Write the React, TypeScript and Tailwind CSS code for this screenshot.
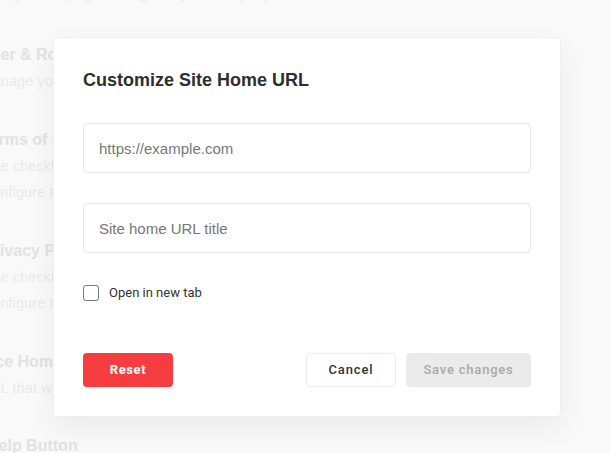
import React from "react";

const sans = { fontFamily: '"Liberation Sans", Arial, sans-serif' } as const;

function BgHeading({ text, offset }: { text: string; offset: string }) {
  return (
    <div className={`h-[26px] leading-[26px] text-[16px] font-bold text-[#e2e2e2] whitespace-nowrap ${offset}`}>{text}</div>
  );
}
function BgLine({ text, offset }: { text: string; offset: string }) {
  return (
    <div className={`h-[26px] leading-[26px] text-[14px] tracking-[0.3px] text-[#e9e9e9] whitespace-nowrap ${offset}`}>{text}</div>
  );
}

export default function App() {
  return (
    <div className="relative w-[610px] h-[453px] overflow-hidden bg-[#f9f9f9]" style={sans}>
      {/* faded page behind the dialog */}
      <div className="flex flex-col -mt-[19px]">
        <BgLine text="Adjust the page settings for your company" offset="ml-[-2px]" />
        <div className="flex flex-col mt-[35px]">
          <BgHeading text="User & Roles" offset="ml-[-20px]" />
          <BgLine text="Manage your users and roles" offset="ml-[-19px]" />
        </div>
        <div className="flex flex-col mt-[33px]">
          <BgHeading text="Terms of Service" offset="ml-[-19px]" />
          <BgLine text="Use checkbox to enable terms" offset="ml-[-17px]" />
          <BgLine text="Configure the terms of service" offset="ml-[-18px]" />
        </div>
        <div className="flex flex-col mt-[33px]">
          <BgHeading text="Privacy Policy" offset="ml-[-17px]" />
          <BgLine text="Use checkbox to enable policy" offset="ml-[-17px]" />
          <BgLine text="Configure the privacy policy" offset="ml-[-18px]" />
        </div>
        <div className="flex flex-col mt-[33px]">
          <BgHeading text="Workspace Home URL" offset="ml-[-72px]" />
          <BgLine text="URL that will open from the logo" offset="ml-[-20px]" />
        </div>
        <div className="flex flex-col mt-[32px]">
          <BgHeading text="Help Button" offset="ml-[-13px]" />
        </div>
      </div>

      {/* dialog */}
      <div className="absolute left-[53px] top-[37px] w-[508px] bg-white border border-[#efefef] rounded-[4px] shadow-[0_12px_30px_rgba(0,0,0,0.06)] px-[29px] pt-[31px] pb-[29px] flex flex-col">
        <h2 className="text-[18px] leading-[22px] font-bold text-[#2e2e2e]" style={sans}>Customize Site Home URL</h2>
        <input
          className="mt-[32px] h-[50px] w-full rounded-[4px] border border-[#e6e6e6] px-[15px] text-[15px] text-[#333] placeholder:text-[#777] outline-none"
          placeholder="https://example.com"
          style={sans}
        />
        <input
          className="mt-[30px] h-[50px] w-full rounded-[4px] border border-[#e6e6e6] px-[15px] text-[15px] text-[#333] placeholder:text-[#777] outline-none"
          placeholder="Site home URL title"
          style={sans}
        />
        <label className="mt-[32px] flex items-center gap-[10px] h-[16px]" style={{ fontFamily: 'Roboto, "Liberation Sans", sans-serif' }}>
          <span className="w-[16px] h-[16px] rounded-[3px] border border-[#6f7a8a] bg-white" />
          <span className="text-[13px] text-[#333]">Open in new tab</span>
        </label>
        <div className="mt-[52px] flex items-center" style={{ fontFamily: 'Roboto, "Liberation Sans", sans-serif' }}>
          <button className="w-[90px] h-[34px] rounded-[4px] bg-[#f53d3f] text-white text-[13px] font-bold tracking-[0.6px]">Reset</button>
          <div className="flex-1" />
          <button className="w-[90px] h-[34px] rounded-[4px] border border-[#ececec] bg-white text-[#333] text-[13px] font-medium tracking-[0.9px]">Cancel</button>
          <button className="ml-[10px] w-[125px] h-[34px] rounded-[4px] bg-[#ebebeb] text-[#a9a9a9] text-[13px] font-medium tracking-[0.8px]">Save changes</button>
        </div>
      </div>
    </div>
  );
}
